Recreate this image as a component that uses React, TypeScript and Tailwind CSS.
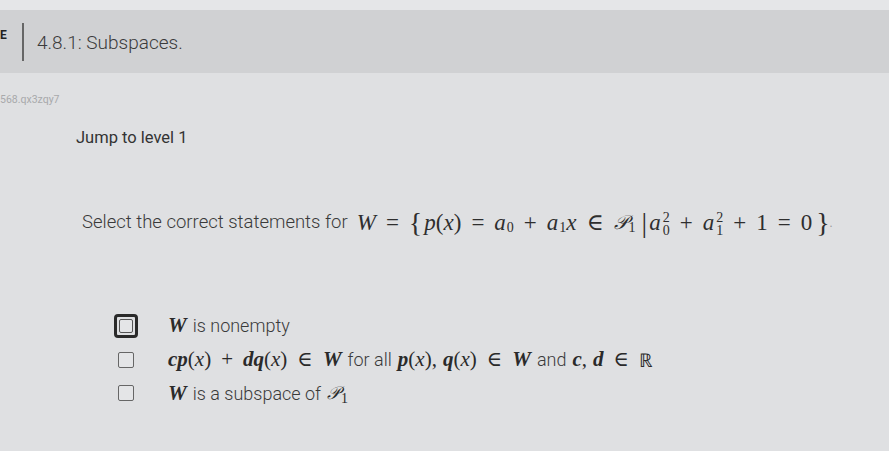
import React from 'react';

const serif = { fontFamily: '"Liberation Serif", "DejaVu Serif", serif' };

// math helpers
const I = ({ children, b }: { children: React.ReactNode; b?: boolean }) => (
  <span className={`italic ${b ? 'font-bold' : ''}`}>{children}</span>
);
const Sub = ({ children }: { children: React.ReactNode }) => (
  <span className="text-[14px] relative top-[5px] ml-[1px]">{children}</span>
);
const Op = ({ children, w = 'mx-[10px]' }: { children: React.ReactNode; w?: string }) => (
  <span className={w}>{children}</span>
);

const Script = ({ children }: { children: React.ReactNode }) => (
  <span className="italic text-[0.85em]" style={{ fontFamily: '"DejaVu Serif", "Liberation Serif", serif' }}>{children}</span>
);

const SupSub = ({ sup, sub }: { sup: string; sub: string }) => (
  <span className="inline-flex flex-col text-[14px] leading-[13px] ml-[2px] mt-[2px]">
    <span>{sup}</span>
    <span>{sub}</span>
  </span>
);

const Checkbox = ({ focused }: { focused?: boolean }) =>
  focused ? (
    <div className="w-[24px] h-[24px] rounded-[4px] border-[3px] border-[#2a2a2a] flex items-center justify-center">
      <div className="w-[14px] h-[14px] rounded-[2px] border border-[#555] bg-[#e4e5e7]" />
    </div>
  ) : (
    <div className="w-[24px] h-[24px] flex items-center justify-center">
      <div className="w-[16px] h-[16px] rounded-[2px] border border-[#666] bg-[#e4e5e7]" />
    </div>
  );

const M = ({ children }: { children: React.ReactNode }) => (
  <span className="text-[21px] text-[#2a2a2a] inline-flex items-center" style={serif}>{children}</span>
);

export default function App() {
  return (
    <div className="w-[889px] h-[451px] overflow-hidden bg-[#dfe0e2] text-[#333]" style={{ fontFamily: 'Roboto, "Liberation Sans", sans-serif' }}>
      <div className="h-[10px] bg-[#e5e6e8]" />
      <div className="h-[63px] bg-[#d0d1d3] flex items-center">
        <span className="w-[10px] text-[12px] font-bold text-[#222] self-start mt-[16px]">E</span>
        <div className="ml-[12px] w-[2px] h-[38px] bg-[#666]" />
        <span className="ml-[13px] text-[19px] font-light text-[#3b3b3b] mt-[4px]">4.8.1: Subspaces.</span>
      </div>
      <div className="h-[17px]" />
      <div className="text-[10.5px] text-[#a8a9ab] leading-[20px]">568.qx3zqy7</div>
      <div className="ml-[76px] mt-[16px] text-[16.5px] text-[#333]">Jump to level 1</div>

      <div className="ml-[82px] mt-[57px] flex items-center h-[30px] text-[18.5px] font-light text-[#3a3a3a] whitespace-nowrap">
        <span>Select the correct statements for</span>
        <span className="ml-[9px] text-[23px] text-[#2e2e2e] flex items-center" style={serif}>
          <I>W</I>
          <Op>=</Op>
          <span className="text-[28px] leading-none mr-[2px]">{'{'}</span>
          <I>p</I>(<I>x</I>)
          <Op>=</Op>
          <I>a</I><Sub>0</Sub>
          <Op>+</Op>
          <I>a</I><Sub>1</Sub><I>x</I>
          <Op>∈</Op>
          <Script>𝒫</Script><Sub>1</Sub>
          <span className="ml-[6px] mr-[2px] text-[28px] leading-none">|</span>
          <I>a</I><SupSub sup="2" sub="0" />
          <Op>+</Op>
          <I>a</I><SupSub sup="2" sub="1" />
          <Op>+</Op>
          <span>1</span>
          <Op>=</Op>
          <span>0</span>
          <span className="ml-[4px] text-[28px] leading-none">{'}'}</span>
          <span className="text-[12px] text-[#999]">.</span>
        </span>
      </div>

      <div className="ml-[114px] mt-[74px] flex flex-col text-[18px] font-light text-[#3a3a3a]">
        <div className="flex items-center h-[28px]">
          <Checkbox focused />
          <span className="ml-[30px] flex items-center gap-[6px]">
            <M><I b>W</I></M>
            <span>is nonempty</span>
          </span>
        </div>
        <div className="flex items-center h-[34px] mt-[3px]">
          <Checkbox />
          <span className="ml-[30px] flex items-center gap-[6px] whitespace-nowrap">
            <M>
              <I b>cp</I>(<I>x</I>)<Op>+</Op><I b>dq</I>(<I>x</I>)<Op>∈</Op><I b>W</I>
            </M>
            <span>for all</span>
            <M>
              <I b>p</I>(<I>x</I>),<span className="ml-[6px]"><I b>q</I></span>(<I>x</I>)<Op>∈</Op><I b>W</I>
            </M>
            <span>and</span>
            <M>
              <I b>c</I>,<span className="ml-[6px]"><I b>d</I></span><Op>∈</Op><span style={{ fontFamily: '"DejaVu Sans", sans-serif' }} className="text-[19px]">ℝ</span>
            </M>
          </span>
        </div>
        <div className="flex items-center h-[33px]">
          <Checkbox />
          <span className="ml-[30px] flex items-center gap-[6px]">
            <M><I b>W</I></M>
            <span>is a subspace of</span>
            <M><Script>𝒫</Script><Sub>1</Sub></M>
          </span>
        </div>
      </div>
    </div>
  );
}
